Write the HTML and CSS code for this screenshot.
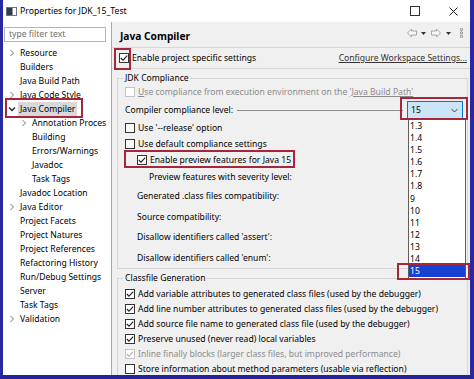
FILE: index.html
```html
<!DOCTYPE html>
<html lang="en">
<head>
    <meta charset="UTF-8">
    <meta name="viewport" content="width=device-width, initial-scale=1.0">
    <title>Properties for JDK_15_Test</title>
    <link rel="stylesheet" href="styles.css">
</head>
<body>

<div class="window">
    <!-- Window title bar -->
    <div class="titlebar">
        <svg class="app-icon" width="11" height="9" viewBox="0 0 11 9">
            <rect x="0.5" y="0.5" width="10" height="8" fill="#fff" stroke="#6b7680"/>
            <rect x="1" y="1" width="5.5" height="7" fill="#2f3d4b"/>
        </svg>
        <span class="title">Properties for JDK_15_Test</span>
        <span class="win-max"></span>
        <svg class="win-close" width="9" height="9" viewBox="0 0 9 9">
            <path d="M0.5 0.5 L8.5 8.5 M8.5 0.5 L0.5 8.5" stroke="#222" stroke-width="1"/>
        </svg>
    </div>

    <div class="main">
        <!-- Left tree -->
        <div class="sidebar">
            <div class="filter">type filter text</div>
            <ul class="tree">
                <li><span class="twisty"><svg width="11" height="8" viewBox="0 0 11 8"><path d="M3.5 1 L6.5 4 L3.5 7" fill="none" stroke="#777" stroke-width="1"/></svg></span><span class="label">Resource</span></li>
                <li><span class="twisty"></span><span class="label">Builders</span></li>
                <li><span class="twisty"></span><span class="label">Java Build Path</span></li>
                <li><span class="twisty"><svg width="11" height="8" viewBox="0 0 11 8"><path d="M3.5 1 L6.5 4 L3.5 7" fill="none" stroke="#777" stroke-width="1"/></svg></span><span class="label">Java Code Style</span></li>
                <li><span class="twisty"><svg width="11" height="8" viewBox="0 0 11 8"><path d="M2 2.5 L5 5.5 L8 2.5" fill="none" stroke="#222" stroke-width="1.3"/></svg></span><span class="label selected">Java Compiler</span></li>
                <li class="child"><span class="twisty"><svg width="11" height="8" viewBox="0 0 11 8"><path d="M3.5 1 L6.5 4 L3.5 7" fill="none" stroke="#777" stroke-width="1"/></svg></span><span class="label">Annotation Proces</span></li>
                <li class="child"><span class="twisty"></span><span class="label">Building</span></li>
                <li class="child"><span class="twisty"></span><span class="label">Errors/Warnings</span></li>
                <li class="child"><span class="twisty"></span><span class="label">Javadoc</span></li>
                <li class="child"><span class="twisty"></span><span class="label">Task Tags</span></li>
                <li><span class="twisty"></span><span class="label">Javadoc Location</span></li>
                <li><span class="twisty"><svg width="11" height="8" viewBox="0 0 11 8"><path d="M3.5 1 L6.5 4 L3.5 7" fill="none" stroke="#777" stroke-width="1"/></svg></span><span class="label">Java Editor</span></li>
                <li><span class="twisty"></span><span class="label">Project Facets</span></li>
                <li><span class="twisty"></span><span class="label">Project Natures</span></li>
                <li><span class="twisty"></span><span class="label">Project References</span></li>
                <li><span class="twisty"></span><span class="label">Refactoring History</span></li>
                <li><span class="twisty"></span><span class="label">Run/Debug Settings</span></li>
                <li><span class="twisty"></span><span class="label">Server</span></li>
                <li><span class="twisty"></span><span class="label">Task Tags</span></li>
                <li><span class="twisty"><svg width="11" height="8" viewBox="0 0 11 8"><path d="M3.5 1 L6.5 4 L3.5 7" fill="none" stroke="#777" stroke-width="1"/></svg></span><span class="label">Validation</span></li>
            </ul>
        </div>

        <!-- Property page -->
        <div class="page">
            <div class="page-head">
                <span class="page-title">Java Compiler</span>
                <svg class="nav" width="58" height="10" viewBox="0 0 58 10">
                    <path d="M0.5 5 L4.5 1 V3 H9.5 V7 H4.5 V9 Z" fill="#f7f7f7" stroke="#a5a5a5"/>
                    <path d="M14 4 H19 L16.5 7 Z" fill="#333"/>
                    <path d="M33.5 5 L29.5 1 V3 H24.5 V7 H29.5 V9 Z" fill="#f7f7f7" stroke="#a5a5a5"/>
                    <path d="M39 4 H44 L41.5 7 Z" fill="#333"/>
                    <circle cx="54.5" cy="1.5" r="1.2" fill="none" stroke="#777" stroke-width="0.8"/>
                    <circle cx="54.5" cy="5" r="1.2" fill="none" stroke="#777" stroke-width="0.8"/>
                    <circle cx="54.5" cy="8.5" r="1.2" fill="none" stroke="#777" stroke-width="0.8"/>
                </svg>
            </div>

            <div class="project-row">
                <span class="cb on"><svg width="10" height="10" viewBox="0 0 10 10"><path d="M1.8 5 L4 7.2 L8.2 2.6" fill="none" stroke="#222" stroke-width="1.1"/></svg></span>
                <span class="cb-text">Enable project specific settings</span>
                <span class="link">Configure Workspace Settings...</span>
            </div>

            <fieldset class="group">
                <legend>JDK Compliance</legend>
                <div class="opt disabled"><span class="cb"></span><span class="cb-text"><u>U</u>se compliance from execution environment on the <u>'Java Build Path'</u></span></div>
                <div class="field combo-row">
                    <span>Compiler compliance level:</span>
                    <span class="leader"></span>
                    <span class="combo">15<svg width="7" height="5" viewBox="0 0 7 5"><path d="M0.5 1 L3.5 4 L6.5 1" fill="none" stroke="#333" stroke-width="0.9"/></svg></span>
                </div>
                <div class="opt"><span class="cb"></span><span class="cb-text">Use '--release' option</span></div>
                <div class="opt"><span class="cb"></span><span class="cb-text">Use default compliance settings</span></div>
                <div class="opt indent"><span class="cb"><svg width="10" height="10" viewBox="0 0 10 10"><path d="M1.8 5 L4 7.2 L8.2 2.6" fill="none" stroke="#222" stroke-width="1.1"/></svg></span><span class="cb-text">Enable preview features for Java 15</span></div>
                <div class="field short indent2">Preview features with severity level:</div>
                <div class="field indent">Generated .class files compatibility:</div>
                <div class="field indent">Source compatibility:</div>
                <div class="field indent">Disallow identifiers called 'assert':</div>
                <div class="field indent">Disallow identifiers called 'enum':</div>
            </fieldset>

            <fieldset class="group classfile">
                <legend>Classfile Generation</legend>
                <div class="opt"><span class="cb"><svg width="10" height="10" viewBox="0 0 10 10"><path d="M1.8 5 L4 7.2 L8.2 2.6" fill="none" stroke="#222" stroke-width="1.1"/></svg></span><span class="cb-text">Add variable attributes to generated class files (used by the debugger)</span></div>
                <div class="opt"><span class="cb"><svg width="10" height="10" viewBox="0 0 10 10"><path d="M1.8 5 L4 7.2 L8.2 2.6" fill="none" stroke="#222" stroke-width="1.1"/></svg></span><span class="cb-text">Add line number attributes to generated class files (used by the debugger)</span></div>
                <div class="opt"><span class="cb"><svg width="10" height="10" viewBox="0 0 10 10"><path d="M1.8 5 L4 7.2 L8.2 2.6" fill="none" stroke="#222" stroke-width="1.1"/></svg></span><span class="cb-text">Add source file name to generated class file (used by the debugger)</span></div>
                <div class="opt"><span class="cb"><svg width="10" height="10" viewBox="0 0 10 10"><path d="M1.8 5 L4 7.2 L8.2 2.6" fill="none" stroke="#222" stroke-width="1.1"/></svg></span><span class="cb-text">Preserve unused (never read) local variables</span></div>
                <div class="opt disabled"><span class="cb"><svg width="10" height="10" viewBox="0 0 10 10"><path d="M1.8 5 L4 7.2 L8.2 2.6" fill="none" stroke="#b5b5b5" stroke-width="1.1"/></svg></span><span class="cb-text">Inline finally blocks (larger class files, but improved performance)</span></div>
                <div class="opt"><span class="cb"></span><span class="cb-text">Store information about method parameters (usable via reflection)</span></div>
            </fieldset>
        </div>
    </div>

    <!-- Open compliance level list -->
    <ul class="dropdown">
        <li>1.3</li>
        <li>1.4</li>
        <li>1.5</li>
        <li>1.6</li>
        <li>1.7</li>
        <li>1.8</li>
        <li>9</li>
        <li>10</li>
        <li>11</li>
        <li>12</li>
        <li>13</li>
        <li>14</li>
        <li class="selected">15</li>
    </ul>

    <!-- Red highlight boxes -->
    <div class="mark mark-tree"></div>
    <div class="mark mark-project"></div>
    <div class="mark mark-combo"></div>
    <div class="mark mark-preview"></div>
    <div class="mark mark-item"></div>
</div>

</body>
</html>
```

FILE: styles.css
```css
/* Base page */
body {
    margin: 0;
    font-family: "Noto Sans", "DejaVu Sans", sans-serif;
    font-size: 8.6px;
    color: #000;
    background: #fff;
}

ul {
    list-style: none;
    margin: 0;
    padding: 0;
}

/* Dialog window */
.window {
    position: relative;
    width: 474px;
    height: 379px;
    box-sizing: border-box;
    border-left: 3px solid #2a28a0;
    border-right: 4px solid #2a28a0;
    border-bottom: 4px solid #25239a;
    background: #fff;
    overflow: hidden;
}

.titlebar {
    display: flex;
    align-items: center;
    height: 22px;
    padding-left: 3px;
}

.app-icon {
    display: block;
}

.title {
    margin-left: 3px;
    font-size: 8.7px;
}

.win-max {
    margin-left: auto;
    width: 8px;
    height: 8px;
    border: 1px solid #333;
}

.win-close {
    display: block;
    margin-left: 29px;
    margin-right: 12px;
}

.main {
    display: flex;
    height: 353px;
}

/* Tree on the left */
.sidebar {
    width: 109px;
    box-sizing: border-box;
    border-right: 1px solid #a9a9a9;
    background: #fff;
}

.filter {
    margin: 5px 0 0 1px;
    width: 102px;
    height: 15px;
    box-sizing: border-box;
    border: 1px solid #b4b4b4;
    padding-left: 4px;
    line-height: 13px;
    color: #6e6e6e;
}

.tree {
    margin-top: 4px;
}

.tree li {
    display: flex;
    align-items: center;
    height: 14px;
    padding-left: 4px;
    white-space: nowrap;
}

.tree li.child {
    padding-left: 16px;
}

.twisty {
    display: flex;
    width: 11px;
}

.label {
    padding: 0 2px;
    line-height: 14px;
}

.label.selected {
    background: #d9d9d9;
    line-height: 15px;
}

/* Property page */
.page {
    flex: 1;
    background: #f0f0f0;
    overflow: hidden;
}

.page-head {
    display: flex;
    align-items: center;
    height: 25px;
    padding-left: 8px;
    border-bottom: 1px solid #d8d8d8;
}

.page-title {
    font-weight: bold;
    font-size: 10.2px;
    margin-top: 2px;
}

.nav {
    display: block;
    margin-left: auto;
    margin-right: 5px;
    margin-bottom: 3px;
}

.project-row {
    display: flex;
    align-items: center;
    height: 20px;
    padding-left: 7px;
    padding-right: 3px;
    border-bottom: 1px solid #d8d8d8;
}

.link {
    margin-left: auto;
    color: #333;
    text-decoration: underline;
}

/* Checkboxes */
.cb {
    display: block;
    flex: none;
    width: 10px;
    height: 10px;
    box-sizing: border-box;
    border: 1px solid #333;
    background: #fff;
}

.cb svg {
    display: block;
    margin: -1px;
}

.cb-text {
    margin-left: 3px;
    white-space: nowrap;
}

/* Group boxes */
.group {
    margin: 3px 2px 0 5px;
    padding: 0 4px 0 7px;
    border: 1px solid #d6d6d6;
    min-width: 0;
}

.group legend {
    padding: 0 2px;
    margin-left: -2px;
    line-height: 12px;
}

.opt {
    display: flex;
    align-items: center;
    height: 16px;
}

.classfile {
    padding-top: 2px;
}

.classfile .opt {
    height: 15px;
}

.opt.disabled {
    color: #8c8c8c;
}

.opt.disabled .cb {
    border-color: #c4c4c4;
}

.field {
    display: flex;
    align-items: center;
    height: 20.5px;
    white-space: nowrap;
}

.field.short {
    height: 18px;
}

.combo-row {
    height: 20px;
}

.indent {
    padding-left: 12px;
}

.indent2 {
    padding-left: 24px;
}

.leader {
    flex: 1;
    margin: 0 4px;
    border-top: 1px solid #8f8f8f;
}

.combo {
    display: flex;
    align-items: center;
    justify-content: space-between;
    width: 56px;
    height: 18px;
    box-sizing: border-box;
    padding: 0 4px 0 3px;
    border: 1px solid #0078d7;
    background: #cce4f7;
}

/* Open list of the combo */
.dropdown {
    position: absolute;
    left: 405px;
    top: 119px;
    width: 58px;
    height: 161px;
    box-sizing: border-box;
    border: 1px solid #5f5f5f;
    background: #fff;
}

.dropdown li {
    height: 12.1px;
    line-height: 12.1px;
    padding-left: 1px;
}

.dropdown li.selected {
    background: #1741d1;
    color: #fff;
}

/* Red annotation boxes */
.mark {
    position: absolute;
    border: 2px solid #a8263a;
}

.mark-tree {
    left: 2px;
    top: 98px;
    width: 74px;
    height: 16px;
}

.mark-project {
    left: 111px;
    top: 48px;
    width: 13px;
    height: 18px;
}

.mark-combo {
    left: 397px;
    top: 97px;
    width: 64px;
    height: 19px;
}

.mark-preview {
    left: 121px;
    top: 150px;
    width: 167px;
    height: 14px;
}

.mark-item {
    left: 394px;
    top: 263px;
    width: 69px;
    height: 13px;
}
```
